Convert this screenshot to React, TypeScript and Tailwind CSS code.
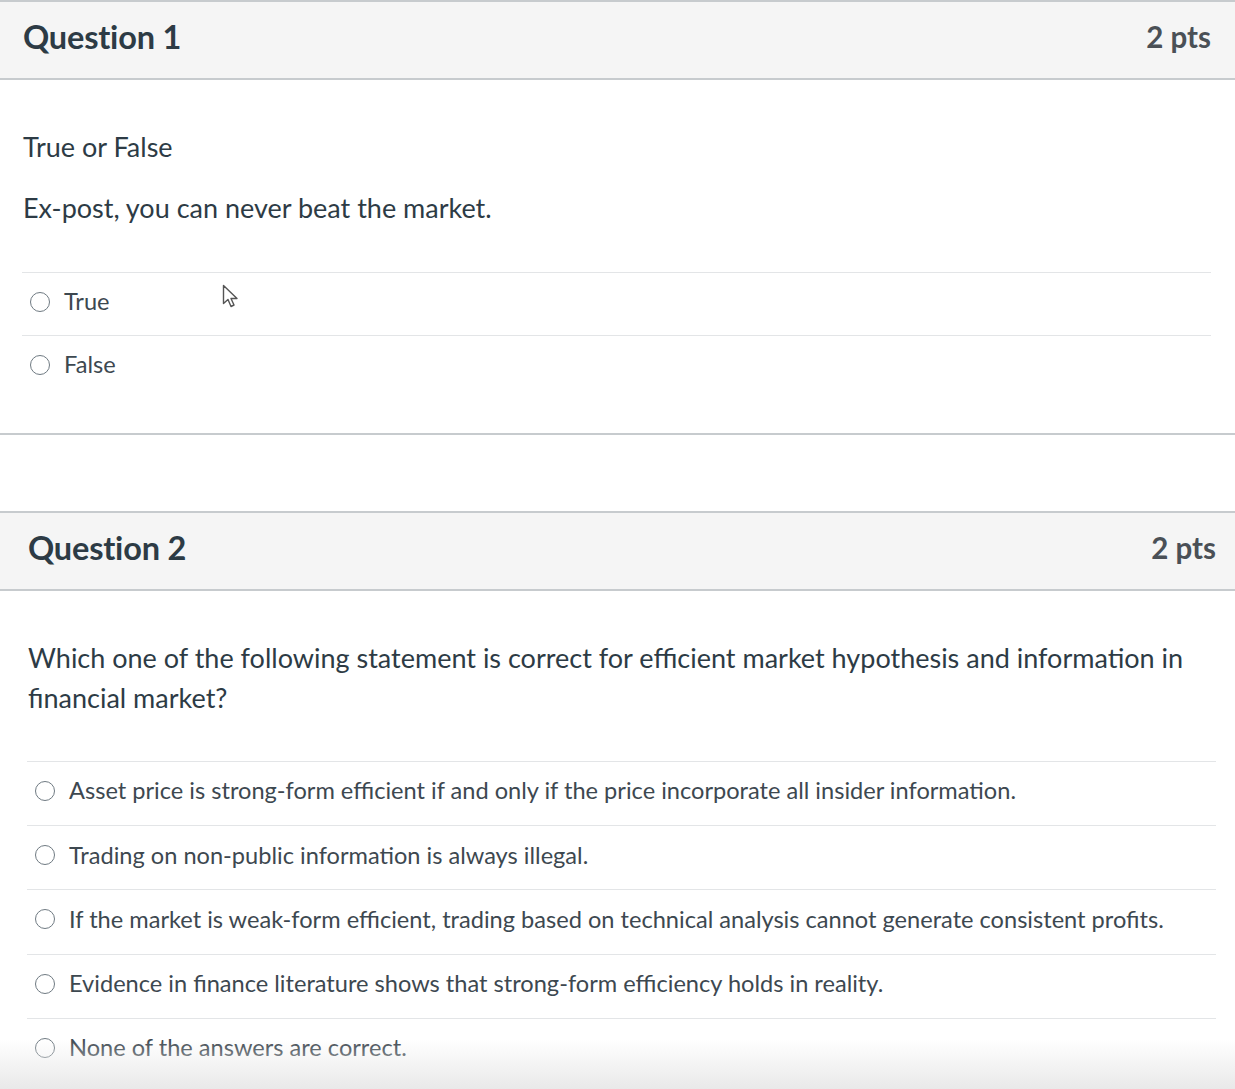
import React from "react";

interface Question {
  title: string;
  points: string;
  prompt: string[];
  answers: string[];
  shift: boolean;
}

const questions: Question[] = [
  {
    title: "Question 1",
    points: "2 pts",
    prompt: ["True or False", "Ex-post, you can never beat the market."],
    answers: ["True", "False"],
    shift: false,
  },
  {
    title: "Question 2",
    points: "2 pts",
    prompt: [
      "Which one of the following statement is correct for efficient market hypothesis and information in financial market?",
    ],
    answers: [
      "Asset price is strong-form efficient if and only if the price incorporate all insider information.",
      "Trading on non-public information is always illegal.",
      "If the market is weak-form efficient, trading based on technical analysis cannot generate consistent profits.",
      "Evidence in finance literature shows that strong-form efficiency holds in reality.",
      "None of the answers are correct.",
    ],
    shift: true,
  },
];

const Radio = () => (
  <span className="inline-block w-[20px] h-[20px] rounded-full border-[1.5px] border-[#6f7a82] bg-white shrink-0" />
);

const QuestionCard = ({ q }: { q: Question }) => {
  const pad = q.shift ? "pl-[28px] pr-[19px]" : "pl-[23px] pr-[24px]";
  const list = q.shift ? "ml-[27px] mr-[19px]" : "ml-[22px] mr-[24px]";
  return (
    <div className="border-b-2 border-[#c7cbce]">
      {/* header */}
      <div
        className={`h-[80px] pb-[5px] flex items-center justify-between bg-[#f5f5f5] border-y-2 border-[#c7cbce] ${pad}`}
      >
        <h2 className="text-[32.5px] font-bold text-[#2d3b45] tracking-[-0.2px]">{q.title}</h2>
        <span className="text-[29.5px] font-bold text-[#4a5056]">{q.points}</span>
      </div>

      {/* body */}
      <div className={q.shift ? "pt-[47px] pb-[10px]" : "pt-[49px] pb-[35px]"}>
        <div className={`${pad} text-[27px] text-[#2d3b45]`}>
          {q.prompt.map((p, i) => (
            <p
              key={i}
              className={q.shift ? "leading-[40px] mb-[43px]" : "leading-[36px] mb-[25px] last:mb-[46px]"}
            >
              {p}
            </p>
          ))}
        </div>
        <ul className={list}>
          {q.answers.map((a, i) => (
            <li
              key={i}
              className={`flex items-center gap-[14px] pl-[8px] pb-[5px] border-t border-[#e3e5e7] text-[23.6px] text-[#3d4850] ${
                q.shift ? "h-[64.2px]" : "h-[63px]"
              }`}
            >
              <Radio />
              <span>{a}</span>
            </li>
          ))}
        </ul>
      </div>
    </div>
  );
};

export default function App() {
  return (
    <div
      className="relative h-[1089px] overflow-hidden bg-white"
      style={{ fontFamily: "Lato, 'Open Sans', sans-serif" }}
    >
      <div className="pt-0">
        <QuestionCard q={questions[0]} />
        <div className="h-[76px]" />
        <QuestionCard q={questions[1]} />
      </div>

      {/* mouse pointer */}
      <svg
        className="absolute left-[222px] top-[284px]"
        width="20"
        height="26"
        viewBox="0 0 20 26"
      >
        <path
          d="M1.5 1.5 L1.5 19.5 L6 15.5 L9 22.5 L12 21 L9 14.5 L15 14.5 Z"
          fill="#fff"
          stroke="#555"
          strokeWidth="1.4"
          strokeLinejoin="round"
        />
      </svg>

      {/* bottom shade */}
      <div className="absolute left-0 right-0 bottom-0 h-[50px] bg-gradient-to-b from-transparent to-[#e9e9e9] pointer-events-none" />
    </div>
  );
}
